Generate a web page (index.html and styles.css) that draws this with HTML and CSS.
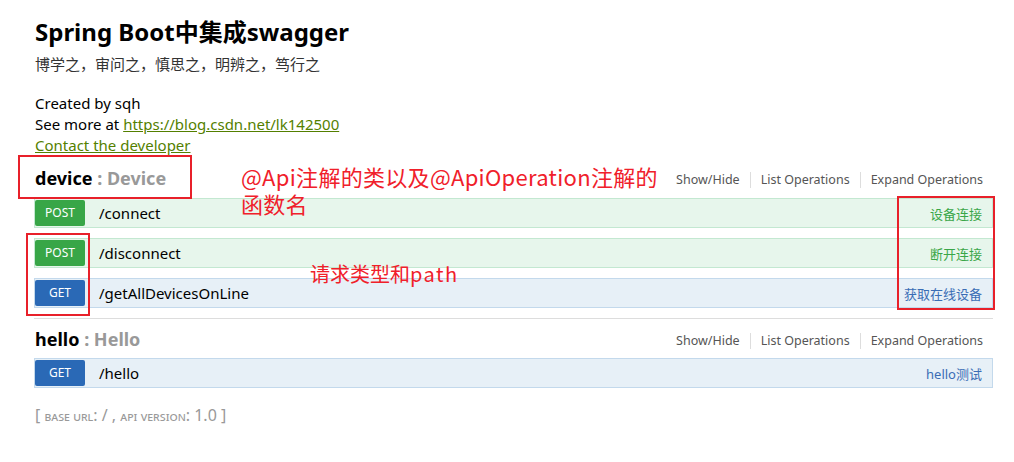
FILE: index.html
```html
<!DOCTYPE html>
<html lang="zh-CN">
<head>
<meta charset="utf-8">
<title>Spring Boot中集成swagger</title>
<link rel="stylesheet" href="styles.css">
</head>
<body>
<div class="page">
  <header class="info">
    <h1 class="title">Spring Boot中集成swagger</h1>
    <p class="desc">博学之，审问之，慎思之，明辨之，笃行之</p>
    <div class="contact">
      <div>Created by sqh</div>
      <div>See more at <a href="#">https://blog.csdn.net/lk142500</a></div>
      <div><a href="#">Contact the developer</a></div>
    </div>
  </header>

  <ul class="resources">
    <li class="resource first">
      <div class="res-head">
        <h2 class="res-title"><span class="res-name">device</span> <span class="res-desc">: Device</span></h2>
        <ul class="options">
          <li>Show/Hide</li>
          <li>List Operations</li>
          <li>Expand Operations</li>
        </ul>
      </div>
      <ul class="ops">
        <li class="op post"><span class="method">POST</span><span class="path">/connect</span><span class="summary">设备连接</span></li>
        <li class="op post"><span class="method">POST</span><span class="path">/disconnect</span><span class="summary">断开连接</span></li>
        <li class="op get"><span class="method">GET</span><span class="path">/getAllDevicesOnLine</span><span class="summary">获取在线设备</span></li>
      </ul>
    </li>
    <li class="resource last">
      <div class="res-head">
        <h2 class="res-title"><span class="res-name">hello</span> <span class="res-desc">: Hello</span></h2>
        <ul class="options">
          <li>Show/Hide</li>
          <li>List Operations</li>
          <li>Expand Operations</li>
        </ul>
      </div>
      <ul class="ops">
        <li class="op get"><span class="method">GET</span><span class="path">/hello</span><span class="summary">hello测试</span></li>
      </ul>
    </li>
  </ul>

  <footer class="footer">[ <span class="sc">base url</span>: / , <span class="sc">api version</span>: 1.0 ]</footer>

  <div class="mark box-title"></div>
  <div class="mark box-method"></div>
  <div class="mark box-summary"></div>
  <div class="note note-1">@Api注解的类以及@ApiOperation注解的<br>函数名</div>
  <div class="note note-2">请求类型和<span class="wide">path</span></div>
</div>
</body>
</html>
```

FILE: styles.css
```css
* { box-sizing: border-box; }
html, body { margin: 0; padding: 0; background: #fff; }
body {
  font-family: "Noto Sans", "Noto Sans CJK SC", sans-serif;
  color: #000;
}
.page {
  position: relative;
  width: 1014px;
  height: 462px;
  padding: 17px 21px 0 34px;
}
.info { padding-left: 1px; }
.title {
  margin: 0;
  font-size: 24px;
  line-height: 30px;
  font-weight: 700;
  color: #000;
}
.desc {
  margin: 2px 0 0;
  font-size: 15px;
  line-height: 30px;
  color: #333;
}
.contact {
  margin-top: 14px;
  font-size: 15px;
  line-height: 21px;
  color: #000;
}
.contact a { color: #547f00; text-decoration: underline; }

.resources { list-style: none; margin: 0; padding: 0; }
.resource { border-bottom: 1px solid #ddd; padding-bottom: 10px; }
.resource.last { border-bottom: none; }
.res-head {
  display: flex;
  align-items: center;
  justify-content: space-between;
  height: 39px;
}
.resource.first .res-head { height: 42px; padding-top: 1px; }
.res-title {
  margin: 0;
  padding-left: 1px;
  font-size: 18px;
  font-weight: 700;
  line-height: 28px;
}
.res-name { color: #000; }
.res-desc { color: #999; }
.options {
  list-style: none;
  margin: 5px 0 0;
  padding: 0;
  display: flex;
  font-size: 12.5px;
  line-height: 16px;
  color: #555;
}
.options li { padding: 0 10px; border-right: 1px solid #ddd; }
.options li:last-child { border-right: none; }

.ops { list-style: none; margin: 0; padding: 0; display: flex; flex-direction: column; gap: 10px; }
.op {
  display: flex;
  align-items: center;
  height: 30px;
  border: 1px solid;
  padding: 1px 10px 1px 0;
}
.op.post { background: #e7f6ec; border-color: #c3e8d1; }
.op.get { background: #e7f0f7; border-color: #c3d9ec; }
.method {
  width: 50px;
  height: 26px;
  border-radius: 2px;
  color: #fff;
  font-size: 12px;
  line-height: 26px;
  text-align: center;
  text-transform: uppercase;
}
.post .method { background: #38a647; }
.get .method { background: #2a69b6; }
.path {
  margin-left: 14px;
  font-size: 15px;
  color: #000;
  flex: 1;
}
.summary { font-size: 13px; }
.post .summary { color: #3aa648; }
.get .summary { color: #3a6db5; }

.footer {
  margin-top: 7px;
  padding-left: 1px;
  font-size: 16px;
  line-height: 20px;
  color: #999;
}
.sc { font-variant: small-caps; font-size: 13px; }

.mark { position: absolute; border: 2px solid #e8202a; }
.box-title { left: 18px; top: 155px; width: 174px; height: 44px; }
.box-method { left: 26px; top: 233px; width: 64px; height: 83px; }
.box-summary { left: 897px; top: 196px; width: 98px; height: 114px; }
.note {
  position: absolute;
  color: #f0202a;
  font-family: "Noto Sans CJK SC", "Noto Sans", sans-serif;
  font-weight: 400;
}
.note-1 { left: 241px; top: 163px; font-size: 22px; line-height: 27px; letter-spacing: 0.3px; }
.note-2 { left: 310px; top: 261px; font-size: 20px; line-height: 26px; }
.wide { letter-spacing: 1.5px; }
```
